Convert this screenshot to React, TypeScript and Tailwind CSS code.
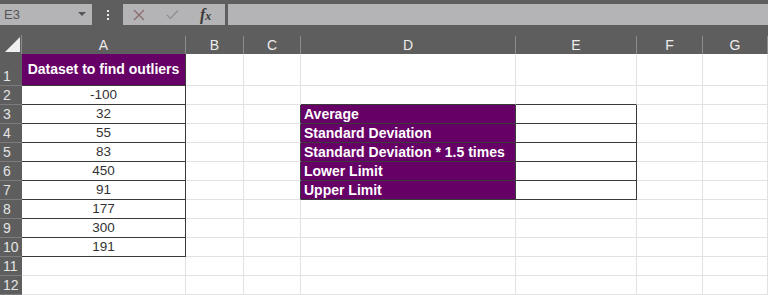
import React from 'react';

const COLS = ['A', 'B', 'C', 'D', 'E', 'F', 'G'];
const WIDTHS = [164, 58, 57, 215, 121, 66, 65];
const ROW_H = [32, 19, 19, 19, 19, 19, 19, 19, 19, 19, 19, 19];

const colA = ['Dataset to find outliers', '-100', '32', '55', '83', '450', '91', '177', '300', '191'];
const labels = ['Average', 'Standard Deviation', 'Standard Deviation * 1.5 times', 'Lower Limit', 'Upper Limit'];

// is the cell (row 1-based, col 0-based) part of a bordered table
const inTable = (r: number, c: number) =>
  (c === 0 && r >= 1 && r <= 10) || ((c === 3 || c === 4) && r >= 3 && r <= 7);

const Cell: React.FC<{ r: number; c: number }> = ({ r, c }) => {
  const darkRight = inTable(r, c) || inTable(r, c + 1);
  const darkBottom = inTable(r, c) || inTable(r + 1, c);
  const purple = (c === 0 && r === 1) || (c === 3 && r >= 3 && r <= 7);

  let text = '';
  let align = 'justify-center';
  if (c === 0 && r <= 10) text = colA[r - 1];
  if (c === 3 && r >= 3 && r <= 7) {
    text = labels[r - 3];
    align = 'justify-start pl-[3px]';
  }

  return (
    <div
      className={`flex items-center ${align} border-r border-b overflow-hidden whitespace-nowrap ${
        darkRight ? 'border-r-[#3a3a3a]' : 'border-r-[#e2e2e2]'
      } ${darkBottom ? 'border-b-[#3a3a3a]' : 'border-b-[#e2e2e2]'} ${
        purple ? 'bg-[#660066] text-white font-bold text-[14px]' : 'bg-white text-[#333] text-[13.5px] pt-[1px]'
      }`}
    >
      {text}
    </div>
  );
};

export default function App() {
  const template = `22px ${WIDTHS.map((w) => `${w}px`).join(' ')}`;
  const rowTemplate = `19px ${ROW_H.map((h) => `${h}px`).join(' ')}`;

  return (
    <div className="w-[768px] h-[295px] overflow-hidden bg-[#5e5e5e] font-['Liberation_Sans',Arial,sans-serif]">
      {/* Formula bar */}
      <div className="h-[35px] flex items-start pt-[4px] gap-0">
        <div className="w-[92px] h-[21px] bg-[#b4b4b6] flex items-center justify-between pl-[4px] pr-[6px] text-[13px] text-[#555]">
          <span>E3</span>
          <svg width="8" height="5" viewBox="0 0 8 5">
            <path d="M0 0 L8 0 L4 4 Z" fill="#555" />
          </svg>
        </div>
        <div className="w-[31px] h-[21px] flex flex-col items-center justify-center gap-[2px]">
          <span className="w-[2px] h-[2px] bg-[#e8e8e8]" />
          <span className="w-[2px] h-[2px] bg-[#e8e8e8]" />
          <span className="w-[2px] h-[2px] bg-[#e8e8e8]" />
        </div>
        <div className="w-[102px] h-[21px] bg-[#b4b4b6] flex items-center pl-[10px] gap-[21px]">
          <svg width="12" height="12" viewBox="0 0 12 12">
            <path d="M1 1 L11 11 M11 1 L1 11" stroke="#8a6a6a" strokeWidth="1.2" />
          </svg>
          <svg width="13" height="11" viewBox="0 0 13 11">
            <path d="M1 6 L4.5 9.5 L12 1.5" stroke="#8f8f8f" strokeWidth="1.2" fill="none" />
          </svg>
          <span className="font-['Liberation_Serif',serif] italic font-bold text-[16px] text-[#3a3a3a] leading-none">
            f<span className="text-[12px]">x</span>
          </span>
        </div>
        <div className="ml-[3px] flex-1 h-[21px] bg-[#b4b4b6]" />
      </div>

      {/* Sheet grid */}
      <div className="grid" style={{ gridTemplateColumns: template, gridTemplateRows: rowTemplate }}>
        {/* corner */}
        <div className="relative border-r border-[#8c8c8c]">
          <svg className="absolute left-[5px] bottom-[2px]" width="15" height="15" viewBox="0 0 15 15">
            <path d="M15 0 L15 15 L0 15 Z" fill="#f0f0f0" />
          </svg>
        </div>
        {COLS.map((c) => (
          <div
            key={c}
            className="flex items-center justify-center border-r border-[#8c8c8c] text-[14px] text-[#ececec] mt-[1px]"
          >
            {c}
          </div>
        ))}

        {ROW_H.map((_, i) => {
          const r = i + 1;
          return (
            <React.Fragment key={r}>
              <div className="flex items-end pl-[3px] border-b border-[#7c7c7c] text-[14px] leading-[18px] text-[#e4e4e4]">
                {r}
              </div>
              {COLS.map((_, c) => (
                <div key={c} className="grid">
                  <Cell r={r} c={c} />
                </div>
              ))}
            </React.Fragment>
          );
        })}
      </div>
    </div>
  );
}
